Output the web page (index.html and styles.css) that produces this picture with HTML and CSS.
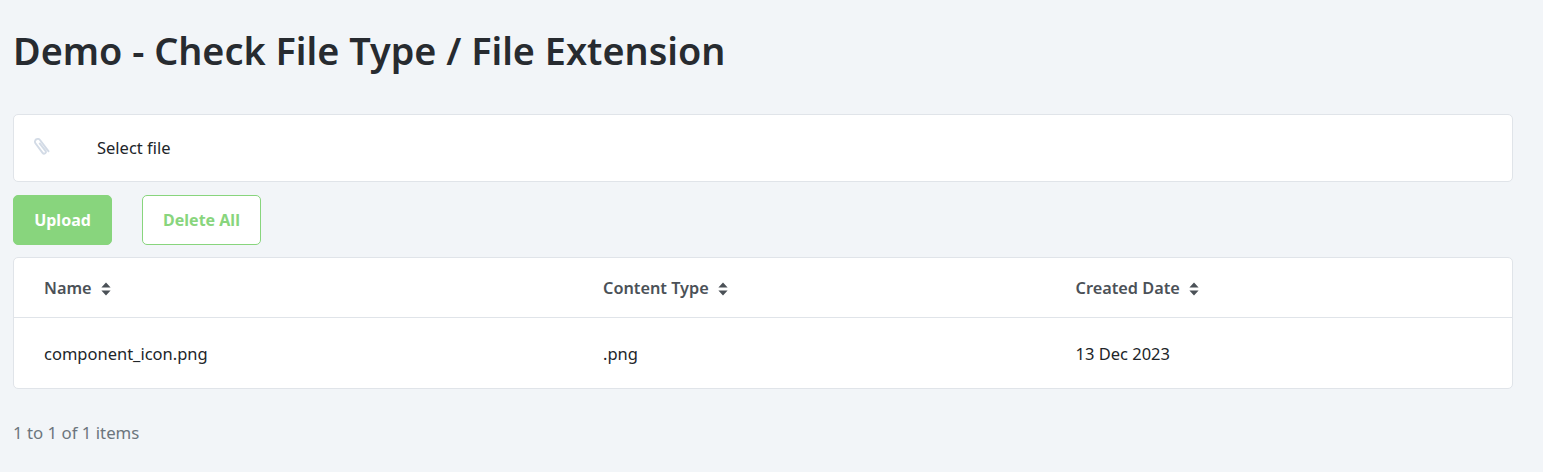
FILE: index.html
```html
<!DOCTYPE html>
<html lang="en">
<head>
    <meta charset="UTF-8">
    <title>Demo - Check File Type / File Extension</title>
    <link rel="stylesheet" href="styles.css">
</head>
<body>
    <div class="page">
        <h1 class="title">Demo - Check File Type / File Extension</h1>

        <div class="file-box">
            <svg class="clip" viewBox="0 0 16 16" width="18" height="18" fill="none" stroke="#d3dbe6" stroke-width="1.7">
                <path d="M14.2 13.2 6.4 2.9C5.5 1.6 3.9 1.3 2.8 2.1 1.6 3 1.4 4.6 2.3 5.8l6.2 8.3c.6.8 1.6.9 2.3.4.7-.5.8-1.5.3-2.2L5.6 5.2"/>
            </svg>
            <span class="file-label">Select file</span>
        </div>

        <div class="actions">
            <button class="btn btn-primary">Upload</button>
            <button class="btn btn-outline">Delete All</button>
        </div>

        <div class="table-card">
            <div class="row head">
                <div class="cell">Name <svg class="sort" viewBox="0 0 10 14" width="10" height="14"><path d="M5 0.5 9.6 5.6H.4ZM5 13.5 .4 8.4H9.6Z"/></svg></div>
                <div class="cell">Content Type <svg class="sort" viewBox="0 0 10 14" width="10" height="14"><path d="M5 0.5 9.6 5.6H.4ZM5 13.5 .4 8.4H9.6Z"/></svg></div>
                <div class="cell">Created Date <svg class="sort" viewBox="0 0 10 14" width="10" height="14"><path d="M5 0.5 9.6 5.6H.4ZM5 13.5 .4 8.4H9.6Z"/></svg></div>
            </div>
            <div class="row body-row">
                <div class="cell">component_icon.png</div>
                <div class="cell">.png</div>
                <div class="cell">13 Dec 2023</div>
            </div>
        </div>

        <p class="count">1 to 1 of 1 items</p>
    </div>
</body>
</html>
```
FILE: styles.css
```css
body { margin: 0; background: #f2f5f8; font-family: "Noto Sans", "Open Sans", sans-serif; color: #212529; font-size: 16.5px; }
.page { width: 1500px; margin-left: 13px; }
.title { margin: 0; padding-top: 25px; height: 114px; box-sizing: border-box; font-size: 37.8px; line-height: 52px; font-weight: 600; color: #272b30; }
.file-box { display: flex; align-items: center; height: 68px; box-sizing: border-box; background: #fff; border: 1px solid #e0e4e9; border-radius: 5px; padding: 0 0 2px 19px; }
.clip { flex: none; margin-top: -3px; }
.file-label { margin-left: 46px; }
.actions { display: flex; gap: 30px; margin-top: 13px; }
.btn { height: 50px; box-sizing: border-box; border-radius: 5px; font-family: inherit; font-size: 16px; font-weight: 700; padding: 0; }
.btn-primary { width: 99px; background: #88d57d; border: 1px solid #88d57d; color: #fff; }
.btn-outline { width: 119px; background: #fff; border: 1px solid #88d57d; color: #88d57d; }
.table-card { margin-top: 12px; height: 132px; box-sizing: border-box; background: #fff; border: 1px solid #e0e4e9; border-radius: 5px; }
.row { display: grid; grid-template-columns: 559px 472.5px 1fr; padding-left: 30px; align-items: center; }
.head { height: 59px; border-bottom: 1px solid #e0e4e9; font-weight: 600; font-size: 16.3px; color: #4b5157; }
.body-row { height: 70px; }
.sort { margin-left: 5px; vertical-align: -2px; fill: #4b5157; }
.count { margin: 33px 0 0; color: #6c757d; line-height: 21px; font-size: 16.8px; }
```
